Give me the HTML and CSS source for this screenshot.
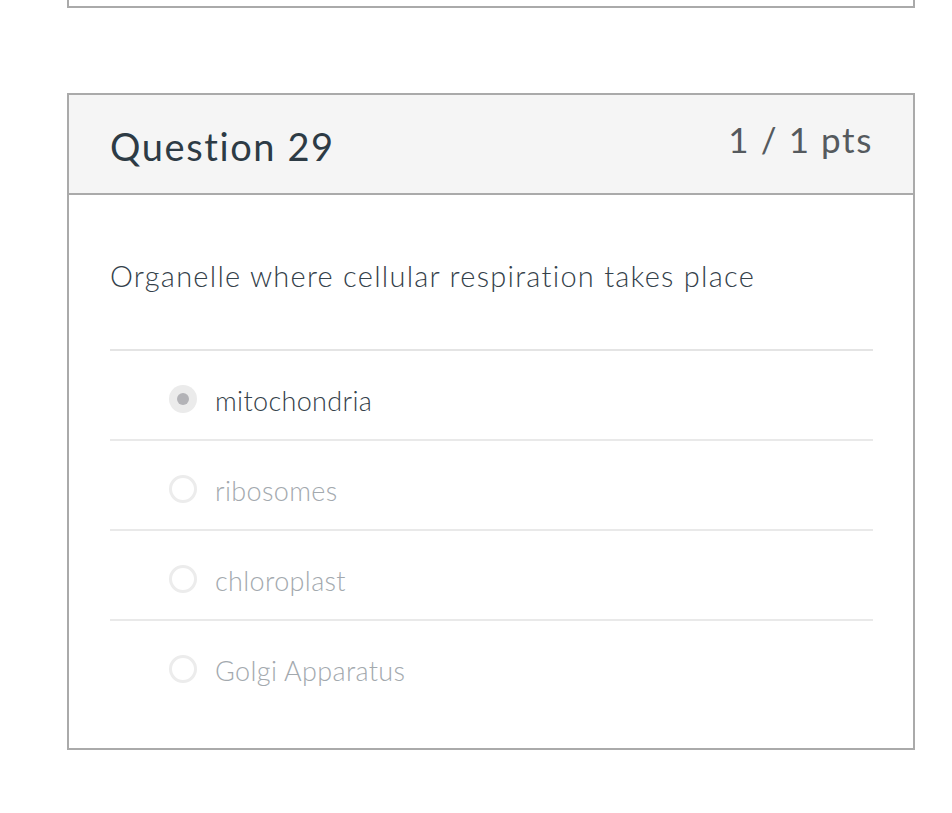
FILE: index.html
```html
<!DOCTYPE html>
<html lang="en">
<head>
<meta charset="utf-8">
<title>Question 29</title>
<link rel="stylesheet" href="styles.css">
</head>
<body>
<div class="prev-card"></div>
<div class="question">
  <div class="header">
    <h2 class="title">Question 29</h2>
    <div class="pts">1 / 1 pts</div>
  </div>
  <div class="body">
    <p class="text">Organelle where cellular respiration takes place</p>
    <div class="answers">
      <div class="answer selected">
        <span class="radio checked"></span>
        <span class="label">mitochondria</span>
      </div>
      <div class="answer">
        <span class="radio"></span>
        <span class="label">ribosomes</span>
      </div>
      <div class="answer">
        <span class="radio"></span>
        <span class="label">chloroplast</span>
      </div>
      <div class="answer last">
        <span class="radio"></span>
        <span class="label">Golgi Apparatus</span>
      </div>
    </div>
  </div>
</div>
</body>
</html>
```

FILE: styles.css
```css
* { box-sizing: border-box; }
html, body {
  margin: 0;
  padding: 0;
  background: #fff;
  font-family: "Lato", "Liberation Sans", sans-serif;
  color: #2d3b45;
}
.prev-card {
  margin-left: 67px;
  width: 848px;
  height: 8px;
  border: 2px solid #aaa;
  border-top: none;
}
.question {
  margin: 85px 0 0 67px;
  width: 848px;
  border: 2px solid #aaa;
}
.header {
  display: flex;
  justify-content: space-between;
  align-items: flex-start;
  height: 100px;
  padding: 0 42px 0 41px;
  background: #f5f5f5;
  border-bottom: 2px solid #aaa;
}
.title {
  margin: 29px 0 0;
  font-size: 38px;
  font-weight: 400;
  line-height: 1.2;
  letter-spacing: 1.6px;
  color: #2d3b45;
}
.pts {
  margin-top: 23px;
  margin-right: -2px;
  font-size: 35px;
  font-weight: 400;
  line-height: 1.2;
  letter-spacing: 1.6px;
  color: #555a5e;
}
.body {
  padding: 64px 40px 39px 41px;
}
.text {
  margin: 0;
  font-size: 29px;
  font-weight: 300;
  line-height: 1.2;
  letter-spacing: 1.25px;
  padding-bottom: 55px;
  border-bottom: 2px solid #e4e4e4;
  color: #34414a;
}
.answer {
  display: flex;
  align-items: flex-start;
  gap: 18px;
  height: 90px;
  padding: 34px 0 26px 59px;
  border-bottom: 2px solid #e9e9e9;
}
.answer.last {
  border-bottom: none;
  height: 88px;
}
.radio {
  flex: none;
  width: 28px;
  height: 28px;
  border-radius: 50%;
  border: 3px solid #ececec;
  background: #fff;
  display: flex;
  align-items: center;
  justify-content: center;
}
.radio.checked {
  border: none;
  background: #ebebeb;
}
.radio.checked::after {
  content: "";
  width: 12px;
  height: 12px;
  border-radius: 50%;
  background: #b3b3b7;
}
.label {
  margin-top: 2px;
  font-size: 27px;
  font-weight: 300;
  line-height: 28px;
  letter-spacing: 0.35px;
  color: #a3a9ae;
}
.selected .label {
  color: #34414a;
}
```
